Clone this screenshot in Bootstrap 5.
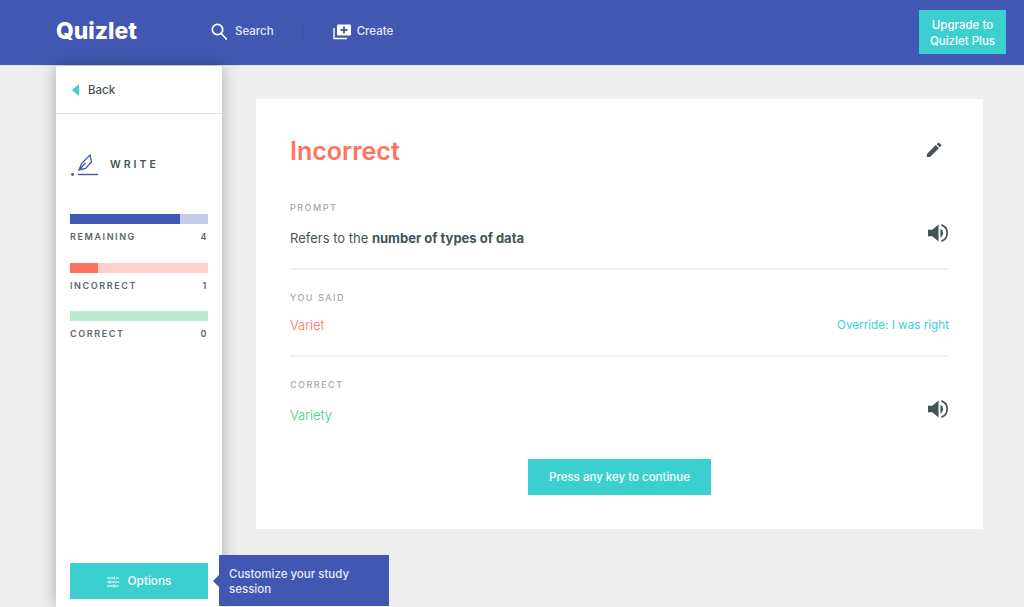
<!DOCTYPE html>
<html lang="en">
<head>
    <meta charset="UTF-8">
    <title>Quizlet Write</title>
    <link href="https://cdn.jsdelivr.net/npm/bootstrap@5.3.0/dist/css/bootstrap.min.css" rel="stylesheet">
    <style>
        html, body { height: 607px; overflow: hidden; }
        body { background: #efefef; font-family: Inter, "Liberation Sans", sans-serif; color: #455358; }
        .top-bar { height: 65px; background: #4257b2; padding: 0 18px 2px 56px; }
        .brand { width: 155px; font-size: 22.800px; font-weight: 800; color: #fff; }
        .top-link { color: #e4e8f6; font-size: 11.500px; font-weight: 500; gap: 8px; }
        .top-sep { width: 1px; height: 17px; background: #3a4da0; margin: 0 30px 0 28px; }
        .create-link { gap: 6px; }
        .upgrade { width: 87px; height: 44px; background: #3ccfcf; color: #fff; font-size: 11.500px; font-weight: 500; line-height: 16px; border-radius: 0; border: 0; padding: 2px 0 0; }
        .page-body { height: 542px; border-top: 1px solid #e2e2e8; padding-left: 56px; }
        .side-panel { width: 166px; height: 541px; background: #fff; box-shadow: 0 0 16px rgba(0, 0, 0, .3); z-index: 1; }
        .back-row { height: 48px; font-size: 11.500px; font-weight: 500; padding-left: 16px; gap: 9px; border-bottom: 1px solid #e4e4e4; }
        .back-label { padding-top: 2px; }
        .back-arrow { width: 0; height: 0; border-style: solid; border-width: 6px 7px 6px 0; border-color: transparent #3ccfcf transparent transparent; }
        .mode-row { padding: 39px 0 0 15px; gap: 11px; font-size: 10.500px; font-weight: 600; letter-spacing: 3px; }
        .stats { padding: 37px 14px 0; }
        .stat-item { margin-bottom: 18.500px; }
        .stat-bar { height: 10px; }
        .stat-fill { height: 10px; }
        .stat-text { font-size: 9px; font-weight: 600; letter-spacing: 1.600px; margin-top: 6px; line-height: 14px; color: #5b666b; }
        .remaining-bar { background: #c6cce8; }
        .remaining-bar .stat-fill { background: #4257b2; }
        .incorrect-bar { background: #ffd0c8; }
        .incorrect-bar .stat-fill { background: #ff725b; }
        .correct-bar { background: #bce9d2; }
        .options-btn { width: 138px; height: 36px; margin: 0 0 8px 14px; padding: 2px 0 0; background: #3ccfcf; color: #fff; font-size: 11.800px; font-weight: 500; border: 0; border-radius: 0; gap: 9px; }
        .hint { position: absolute; left: 219px; top: 555px; width: 170px; height: 51px; background: #4257b2; color: #e8ebf7; font-size: 11.500px; font-weight: 500; line-height: 15px; padding: 12px 10px; z-index: 2; }
        .hint::before { content: ""; position: absolute; left: -6px; top: 20px; border-style: solid; border-width: 6px 6px 6px 0; border-color: transparent #4257b2 transparent transparent; }
        .result-card { width: 727px; height: 430px; margin: 33px 0 0 34px; background: #fff; padding: 0 34px; }
        .card-head { height: 103px; padding-top: 37px; }
        .card-head h1 { font-size: 25px; font-weight: 600; color: #ff725b; margin: 0; }
        .pencil { margin: 6px 7px 0 0; }
        .field { border-bottom: 2px solid #f0f0f0; }
        .field-top { height: 68px; }
        .field-mid { height: 87px; padding-top: 22px; }
        .field-end { padding-top: 22px; }
        .field-label { font-size: 9px; font-weight: 500; letter-spacing: 1.500px; color: #a3a9ad; line-height: 12px; }
        .field-text { font-size: 13px; line-height: 18px; }
        .field-text b { font-weight: 700; }
        .row-top { margin-top: 9px; }
        .row-mid { margin-top: 11px; }
        .row-end { margin-top: 8px; }
        .sound { margin-bottom: 10px; }
        .row-end .sound { margin-bottom: 12px; }
        .wrong { color: #ff725b; font-weight: 300; }
        .right { color: #3ccb7f; font-weight: 300; }
        .override { color: #3ccfcf; font-size: 11.700px; padding-top: 2px; }
        .continue-wrap { margin-top: 28px; }
        .continue-btn { width: 183px; height: 36px; background: #3ccfcf; color: #fff; font-size: 11.500px; font-weight: 500; border: 0; border-radius: 0; padding: 2px 0 0; }
    </style>
</head>
<body>
    <header class="top-bar d-flex align-items-center">
        <div class="brand">Quizlet</div>
        <div class="top-link d-flex align-items-center">
            <svg width="16" height="17" viewBox="0 0 16 17" fill="none" stroke="#fff" stroke-width="1.700"><circle cx="6.500" cy="6.500" r="5.200"/><path d="M10.300 10.500l5 5.500" stroke-linecap="round"/></svg>
            <span>Search</span>
        </div>
        <div class="top-sep"></div>
        <div class="top-link create-link d-flex align-items-center">
            <svg width="18" height="16" viewBox="0 0 18 16"><path d="M4 1.500a1 1 0 0 1 1-1h12a1 1 0 0 1 1 1v9a1 1 0 0 1-1 1H5a1 1 0 0 1-1-1z" fill="#fff"/><path d="M11 2.500v7M7.500 6h7" stroke="#4257b2" stroke-width="1.800"/><path d="M1 4v10.500h13" fill="none" stroke="#fff" stroke-width="1.400"/></svg>
            <span>Create</span>
        </div>
        <button class="upgrade btn ms-auto">Upgrade to<br>Quizlet Plus</button>
    </header>

    <div class="page-body d-flex align-items-start">
        <aside class="side-panel d-flex flex-column">
            <div class="back-row d-flex align-items-center"><span class="back-arrow"></span><span class="back-label">Back</span></div>
            <div class="mode-row d-flex align-items-center">
                <svg width="28" height="24" viewBox="0 0 28 24" fill="none" stroke="#4257b2" stroke-width="1.300"><path d="M8 17l2.500-6.500L19 2l1.500 7-6 6.500zM8 17l6.500-7"/><path d="M7 21.500h20" stroke-width="1.400"/><circle cx="1.500" cy="21.500" r="1.400" fill="#4257b2" stroke="none"/></svg>
                <span>WRITE</span>
            </div>
            <div class="stats">
                <div class="stat-item">
                    <div class="stat-bar remaining-bar"><div class="stat-fill" style="width: 80%"></div></div>
                    <div class="stat-text d-flex justify-content-between"><span>REMAINING</span><span>4</span></div>
                </div>
                <div class="stat-item">
                    <div class="stat-bar incorrect-bar"><div class="stat-fill" style="width: 20%"></div></div>
                    <div class="stat-text d-flex justify-content-between"><span>INCORRECT</span><span>1</span></div>
                </div>
                <div class="stat-item">
                    <div class="stat-bar correct-bar"><div class="stat-fill" style="width: 0"></div></div>
                    <div class="stat-text d-flex justify-content-between"><span>CORRECT</span><span>0</span></div>
                </div>
            </div>
            <button class="options-btn btn d-flex align-items-center justify-content-center mt-auto">
                <svg width="12" height="12" viewBox="0 0 12 12" stroke="#fff" stroke-width="1.200"><path d="M0 2h7M9 2h3M0 6h2M4 6h8M0 10h6M8 10h4M7.500 .5v3M3 4.500v3M7 8.500v3"/></svg>
                <span>Options</span>
            </button>
        </aside>
        <main class="result-card">
            <div class="card-head d-flex justify-content-between align-items-start">
                <h1>Incorrect</h1>
                <svg class="pencil" width="16" height="16" viewBox="0 0 18 18" fill="#455358"><path d="M1 17v-3.500L11 3.500 14.500 7 4.500 17zM12 2.500l1.500-1.500a1 1 0 0 1 1.400 0l2.100 2.100a1 1 0 0 1 0 1.400L15.500 6z"/></svg>
            </div>
            <div class="field field-top">
                <div class="field-label">PROMPT</div>
                <div class="row-top d-flex justify-content-between align-items-center">
                    <div class="field-text">Refers to the <b>number of types of data</b></div>
                    <svg class="sound" width="21" height="20" viewBox="0 0 22 20" fill="#455358"><path d="M0 6.500h4.500L11 1v18l-6.500-5.500H0z"/><path d="M13 5.500a5 5 0 0 1 0 9z"/><path d="M14 1.500a9 9 0 0 1 0 17" fill="none" stroke="#455358" stroke-width="1.800"/></svg>
                </div>
            </div>
            <div class="field field-mid">
                <div class="field-label">YOU SAID</div>
                <div class="row-mid d-flex justify-content-between align-items-center">
                    <div class="field-text wrong">Variet</div>
                    <div class="override">Override: I was right</div>
                </div>
            </div>
            <div class="field-end">
                <div class="field-label">CORRECT</div>
                <div class="row-end d-flex justify-content-between align-items-center">
                    <div class="field-text right">Variety</div>
                    <svg class="sound" width="21" height="20" viewBox="0 0 22 20" fill="#455358"><path d="M0 6.500h4.500L11 1v18l-6.500-5.500H0z"/><path d="M13 5.500a5 5 0 0 1 0 9z"/><path d="M14 1.500a9 9 0 0 1 0 17" fill="none" stroke="#455358" stroke-width="1.800"/></svg>
                </div>
            </div>
            <div class="continue-wrap text-center">
                <button class="continue-btn btn">Press any key to continue</button>
            </div>
        </main>
    </div>
    <div class="hint">Customize your study session</div>
    <script src="https://cdn.jsdelivr.net/npm/bootstrap@5.3.0/dist/js/bootstrap.bundle.min.js"></script>
</body>
</html>
